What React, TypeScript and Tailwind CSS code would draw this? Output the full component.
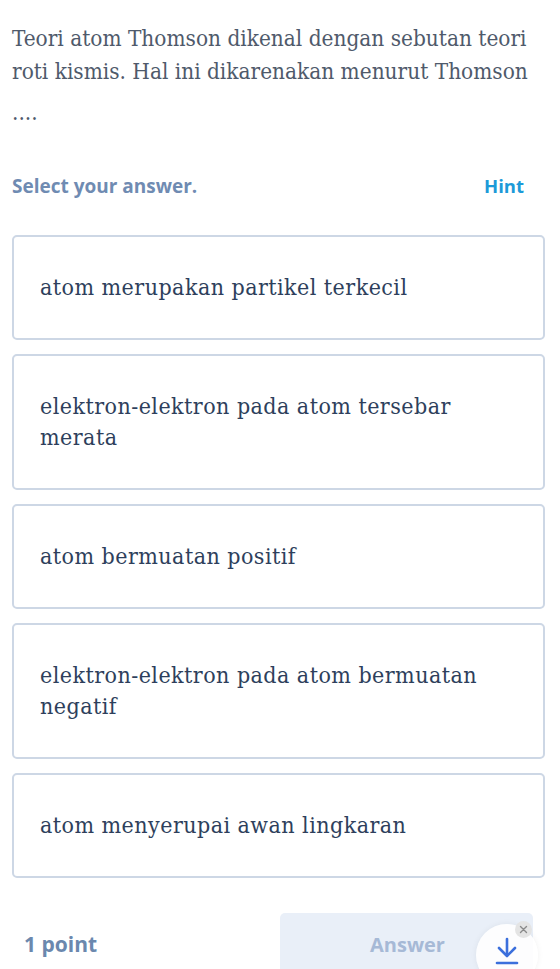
import React from 'react';

const options = [
  'atom merupakan partikel terkecil',
  'elektron-elektron pada atom tersebar merata',
  'atom bermuatan positif',
  'elektron-elektron pada atom bermuatan negatif',
  'atom menyerupai awan lingkaran',
];

const serif = { fontFamily: '"DejaVu Serif Condensed", "DejaVu Serif", serif' };
const sans = { fontFamily: '"Open Sans", "Noto Sans", sans-serif' };

const App: React.FC = () => {
  return (
    <div className="w-[560px] h-[969px] overflow-hidden bg-white relative">
      <div className="px-3 pt-[22px]">
        <p className="text-[22.4px] leading-[33px] text-[#4f5a6b]" style={serif}>
          Teori atom Thomson dikenal dengan sebutan teori
          <br />
          roti kismis. Hal ini dikarenakan menurut Thomson
          <br />
          <span className="block mt-[8px]">....</span>
        </p>

        <div className="flex items-center justify-between mt-[43px] pr-[24px]" style={sans}>
          <span className="text-[19px] font-bold text-[#6f8bb2]">Select your answer.</span>
          <span className="text-[18.5px] font-bold text-[#1d9ad8]">Hint</span>
        </div>

        <div className="mt-[34px] flex flex-col gap-[14px] pr-[3px]">
          {options.map((o, i) => (
            <div
              key={i}
              className="border-2 border-[#cdd7e5] rounded-[5px] pl-[26px] pr-[52px] py-[35px] text-[23px] leading-[31px] tracking-[0.45px] text-[#2e3f5c]"
              style={serif}
            >
              {o}
            </div>
          ))}
        </div>
      </div>

      {/* footer */}
      <div className="flex items-start mt-[35px] pl-6 pr-[27px]" style={sans}>
        <span className="text-[21px] font-bold text-[#6b88ae] flex-1 mt-[16px]">1 point</span>
        <div className="w-[253px] h-[70px] bg-[#e9eff8] rounded-t-[5px] flex justify-center pt-[17px] pl-[2px]">
          <span className="text-[20px] font-bold text-[#a6b9d6]">Answer</span>
        </div>
      </div>

      {/* floating download bubble */}
      <div className="absolute left-[476px] top-[924px] w-[62px] h-[62px] rounded-full bg-white/90 shadow-[0_0_6px_rgba(0,0,0,0.06)] flex items-center justify-center">
        <svg width="26" height="30" viewBox="0 0 26 30" fill="none" stroke="#3b6fdc" strokeWidth="2.6" strokeLinecap="round" strokeLinejoin="round" className="-mt-2">
          <path d="M13 3v16" />
          <path d="M5 12l8 8 8-8" />
          <path d="M3 27h20" />
        </svg>
      </div>
      <div className="absolute left-[515px] top-[921px] w-[17px] h-[17px] rounded-full bg-[#e4e4e4] flex items-center justify-center">
        <svg width="9" height="9" viewBox="0 0 9 9" stroke="#8a8a8a" strokeWidth="1.4" strokeLinecap="round">
          <path d="M1.5 1.5l6 6M7.5 1.5l-6 6" />
        </svg>
      </div>
    </div>
  );
};

export default App;
